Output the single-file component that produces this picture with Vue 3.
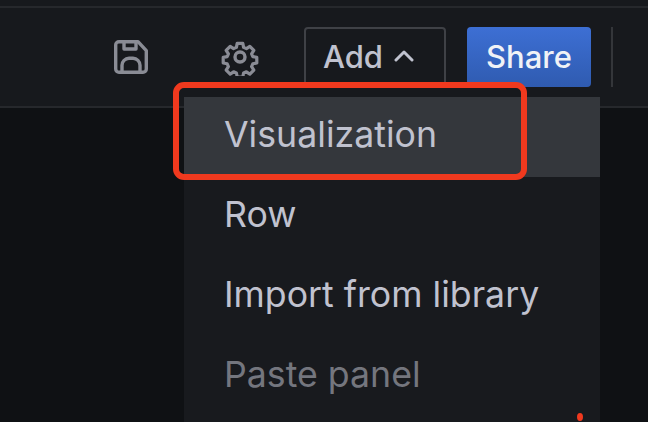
<template>
  <div class="page">
    <div class="top-strip"></div>
    <header class="toolbar">
      <button class="icon-btn save-btn" aria-label="Save">
        <svg viewBox="0 0 34 34" width="34" height="34" fill="none" stroke="#8a8c95" stroke-width="3.400" stroke-linejoin="round">
          <path d="M5 1.700h19l8.300 9V29a3.300 3.300 0 0 1-3.300 3.300H5A3.300 3.300 0 0 1 1.700 29V5A3.300 3.300 0 0 1 5 1.700z" />
          <path d="M10 1.700v7.300h12V1.700" />
          <path d="M8 32.300v-7a7 7 0 0 1 7-7h4a7 7 0 0 1 7 7v7" />
        </svg>
      </button>
      <button class="icon-btn gear-btn" aria-label="Settings">
        <svg viewBox="0 0 38 38" width="38" height="38" fill="none" stroke="#8a8c95" stroke-width="3.400" stroke-linejoin="round">
          <path stroke-width="4" d="M15.500 2h7l1 5 3.500 1.500 4.300-2.800 5 5-2.800 4.300 1.500 3.500 5 1v7l-5 1-1.500 3.500 2.800 4.300-5 5-4.300-2.800-3.500 1.500-1 5h-7l-1-5-3.500-1.500-4.300 2.800-5-5 2.800-4.300-1.500-3.500-5-1v-7l5-1 1.500-3.500-2.800-4.300 5-5 4.300 2.800 3.500-1.500z" transform="translate(3.800 3.800) scale(.8)" />
          <circle cx="19" cy="19" r="5" />
        </svg>
      </button>
      <button class="add-btn">
        Add
        <svg viewBox="0 0 20 12" width="20" height="12" fill="none" stroke="#c0c2cf" stroke-width="3" stroke-linecap="round" stroke-linejoin="round">
          <path d="M2 10l8-8 8 8" />
        </svg>
      </button>
      <button class="share-btn">Share</button>
      <div class="divider"></div>
    </header>

    <main class="content"></main>

    <ul class="menu">
      <li
        v-for="item in menuItems"
        :key="item.label"
        :class="{ active: item.active, disabled: item.disabled }"
      >
        {{ item.label }}
      </li>
    </ul>

    <div class="highlight"></div>
    <div class="red-dot"></div>
  </div>
</template>

<script setup>
const menuItems = [
  { label: "Visualization", active: true },
  { label: "Row" },
  { label: "Import from library" },
  { label: "Paste panel", disabled: true }
];
</script>

<style>
html,
body {
  margin: 0;
  background: #0f1114;
}
</style>

<style scoped>
.page {
  position: relative;
  width: 648px;
  height: 422px;
  overflow: hidden;
  display: flex;
  flex-direction: column;
  background: #0f1114;
  font-family: Inter, "Liberation Sans", sans-serif;
}
.top-strip {
  height: 6px;
  background: #17191d;
  border-bottom: 2px solid #26282c;
  flex: none;
}

/* ===== TOOLBAR ===== */
.toolbar {
  height: 100px;
  flex: none;
  box-sizing: border-box;
  background: #17191d;
  border-bottom: 2px solid #26282c;
  display: flex;
  align-items: flex-start;
  padding: 19px 0 0 114px;
}
.icon-btn {
  height: 60px;
  padding: 0;
  border: none;
  background: none;
  display: flex;
  align-items: center;
  justify-content: center;
}
.save-btn {
  width: 34px;
}
.gear-btn {
  width: 38px;
  margin-left: 73px;
}
.add-btn {
  margin-left: 45px;
  width: 142px;
  height: 60px;
  box-sizing: border-box;
  border: 2px solid #3f4146;
  border-radius: 4px;
  background: #17191d;
  color: #c0c2cf;
  font: 500 31px Inter, "Liberation Sans", sans-serif;
  display: flex;
  align-items: center;
  justify-content: center;
  gap: 11px;
  padding: 0 13px 2px 0;
}
.share-btn {
  margin-left: 21px;
  width: 124px;
  height: 60px;
  border: none;
  border-radius: 4px;
  background: linear-gradient(#3d6fd4, #2f5bb0);
  color: #f0f2f6;
  font: 500 31px Inter, "Liberation Sans", sans-serif;
  padding: 0 0 2px;
}
.divider {
  margin-left: 20px;
  width: 2px;
  height: 60px;
  background: #34363a;
}

.content {
  flex: 1;
}

/* ===== DROPDOWN ===== */
.menu {
  position: absolute;
  left: 184px;
  top: 97px;
  width: 416px;
  height: 325px;
  margin: 0;
  padding: 0;
  list-style: none;
  background: #181a1e;
}
.menu li {
  height: 80px;
  box-sizing: border-box;
  padding: 0 0 7px 40px;
  display: flex;
  align-items: center;
  font-size: 35.700px;
  font-weight: 400;
  color: #c0c2cf;
}
.menu li.active {
  background: #34373c;
}
.menu li.disabled {
  color: #74767e;
}

/* ===== ANNOTATION ===== */
.highlight {
  position: absolute;
  left: 173px;
  top: 82px;
  width: 354px;
  height: 98px;
  box-sizing: border-box;
  border: 6px solid #f0391e;
  border-radius: 11px;
}
.red-dot {
  position: absolute;
  left: 577px;
  top: 413px;
  width: 6px;
  height: 8px;
  border-radius: 50%;
  background: #f0391e;
}
</style>
